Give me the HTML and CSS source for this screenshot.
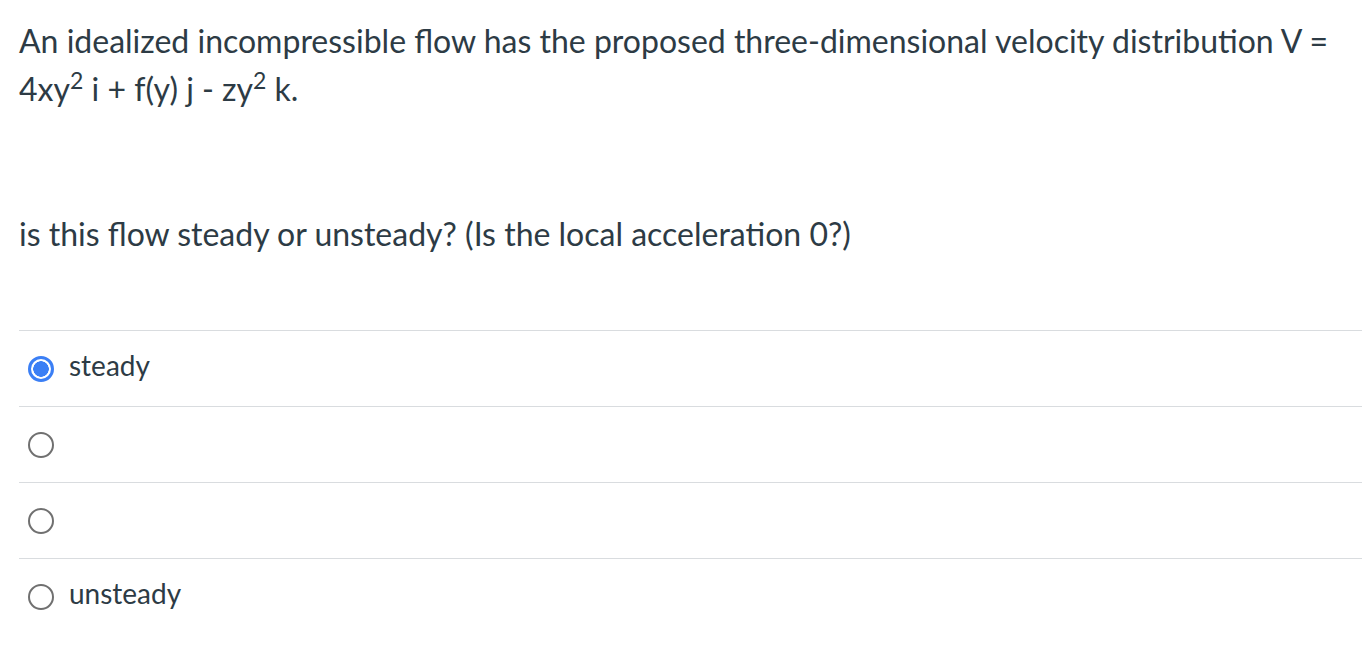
FILE: index.html
```html
<!DOCTYPE html>
<html>
<head>
<meta charset="utf-8">
<link rel="stylesheet" href="styles.css">
</head>
<body>
<div class="question">
  <p class="text lead">An idealized incompressible flow has the proposed three-dimensional velocity distribution V = 4xy<sup>2</sup> i + f(y) j - zy<sup>2</sup> k.</p>
  <p class="text prompt">is this flow steady or unsteady? (Is the local acceleration 0?)</p>
  <div class="answers">
    <label class="answer"><span class="radio checked"></span><span class="label">steady</span></label>
    <label class="answer"><span class="radio"></span><span class="label"></span></label>
    <label class="answer"><span class="radio"></span><span class="label"></span></label>
    <label class="answer"><span class="radio"></span><span class="label">unsteady</span></label>
  </div>
</div>
</body>
</html>
```
FILE: styles.css
```css
html, body {
  margin: 0;
  padding: 0;
  background: #fff;
}
body {
  font-family: Lato, "Open Sans", sans-serif;
  color: #2d3b45;
  overflow: hidden;
}
.question {
  padding: 17px 0 0 19px;
}
.text {
  margin: 0;
  font-size: 32px;
  line-height: 48px;
  max-width: 1322px;
}
.text sup {
  font-size: 23px;
  line-height: 0;
  vertical-align: 12px;
}
.prompt {
  margin-top: 97px;
}
.answers {
  margin-top: 72px;
  border-top: 1px solid #d9dcdf;
}
.answer {
  display: flex;
  align-items: center;
  height: 75px;
  border-bottom: 1px solid #d9dcdf;
  padding-left: 9px;
  gap: 15px;
}
.answer:last-child {
  border-bottom: none;
}
.radio {
  box-sizing: border-box;
  width: 26px;
  height: 26px;
  border-radius: 50%;
  border: 2px solid #707070;
  flex: none;
}
.radio.checked {
  border: 3px solid #3b7ff5;
  background: radial-gradient(circle, #3b7ff5 0 7.5px, #fff 8px);
}
.label {
  font-size: 28px;
  line-height: 40px;
  margin-top: -7px;
}
```
